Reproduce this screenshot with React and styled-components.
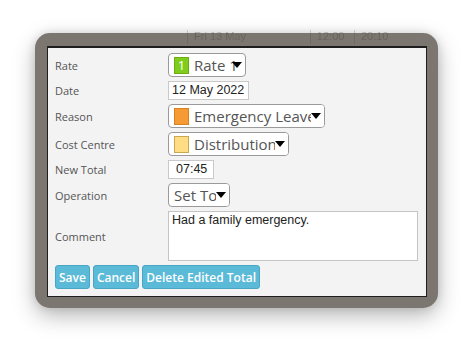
import React from 'react';
import styled, { createGlobalStyle } from 'styled-components';

const GlobalStyle = createGlobalStyle`
  html, body {
    margin: 0;
    padding: 0;
    background: #ffffff;
  }
  body {
    font-family: "Open Sans", "Liberation Sans", sans-serif;
  }
`;

const Page = styled.div`
  width: 474px;
  height: 344px;
  padding: 33px 36px 0 35px;
  box-sizing: border-box;
`;

const Frame = styled.div`
  position: relative;
  height: 275px;
  border-radius: 15px;
  background: #7b766f;
  padding: 13px 11px 11px 12px;
  box-sizing: border-box;
  box-shadow: 0 8px 22px rgba(0, 0, 0, 0.28), 0 0 10px rgba(0, 0, 0, 0.12);
`;

const BehindRow = styled.div`
  position: absolute;
  top: -3px;
  left: 152px;
  right: 40px;
  height: 14px;
  display: flex;
  font-family: "Liberation Sans", sans-serif;
  font-size: 11px;
  color: rgba(60, 55, 50, 0.3);
  filter: blur(0.7px);
`;

const BehindCell = styled.div`
  width: ${({ w }) => w}px;
  padding-left: 6px;
  border-left: 1px solid rgba(60, 55, 50, 0.2);
`;

const Dialog = styled.div`
  height: 100%;
  background: #f3f3f3;
  border: 1px solid #1e1e1e;
  border-top-width: 2px;
  box-sizing: border-box;
  padding: 5px 8px 0 7px;
  display: flex;
  flex-direction: column;
`;

const Form = styled.div`
  display: grid;
  grid-template-columns: 113px 1fr;
  row-gap: 4px;
  align-items: center;
`;

const Label = styled.div`
  font-size: 11px;
  color: #555;
`;

const Select = styled.div`
  position: relative;
  width: ${({ w }) => w}px;
  height: 24px;
  box-sizing: border-box;
  border: 1px solid #9a9a9a;
  border-radius: 4px;
  background: #fff;
  display: flex;
  align-items: center;
  gap: 5px;
  padding-left: 5px;
  overflow: hidden;
  font-size: 15px;
  color: #555;
  white-space: nowrap;
`;

const Swatch = styled.span`
  width: 15px;
  height: 17px;
  box-sizing: border-box;
  background: ${({ c }) => c};
  border: 1px solid ${({ b }) => b};
  color: #fff;
  font-size: 13px;
  line-height: 15px;
  text-align: center;
  flex-shrink: 0;
`;

const Arrow = styled.span`
  position: absolute;
  right: 3px;
  top: 8px;
  width: 0;
  height: 0;
  border-left: 5px solid transparent;
  border-right: 5px solid transparent;
  border-top: 6px solid #000;
`;

const ArrowBg = styled.span`
  position: absolute;
  right: 0;
  top: 0;
  bottom: 0;
  width: 13px;
  background: #fff;
`;

const TextBox = styled.div`
  width: ${({ w }) => w}px;
  height: 19px;
  box-sizing: border-box;
  border: 1px solid #c9c9c9;
  background: #fff;
  font-family: "Liberation Sans", Arial, sans-serif;
  font-size: 12.5px;
  color: #222;
  padding-left: ${({ pl }) => pl || 3}px;
  line-height: 17px;
`;

const TextArea = styled.div`
  width: 250px;
  height: 50px;
  box-sizing: border-box;
  border: 1px solid #c4c4c4;
  background: #fff;
  font-family: "Liberation Sans", Arial, sans-serif;
  font-size: 12.5px;
  color: #222;
  padding: 1px 3px;
`;

const Buttons = styled.div`
  display: flex;
  gap: 3px;
  margin-top: 4px;
`;

const Button = styled.button`
  height: 24px;
  padding: 0 3px;
  border: 1px solid #4aa6c4;
  border-radius: 3px;
  background: #5bbad8;
  color: #fff;
  font-family: "Open Sans", sans-serif;
  font-weight: 600;
  font-size: 12px;
  cursor: pointer;
`;

export default function App() {
  return (
    <>
      <GlobalStyle />
      <Page>
        <Frame>
          <BehindRow>
            <BehindCell w={125}>Fri 13 May</BehindCell>
            <BehindCell w={40}>12:00</BehindCell>
            <BehindCell w={40}>20:10</BehindCell>
          </BehindRow>
          <Dialog>
            <Form>
              <Label>Rate</Label>
              <Select w={78}>
                <Swatch c="#7fcc1c" b="#6aae12">1</Swatch>
                Rate 1
                <Arrow />
              </Select>

              <Label>Date</Label>
              <TextBox w={81}>12 May 2022</TextBox>

              <Label>Reason</Label>
              <Select w={157}>
                <Swatch c="#f59a35" b="#d9801f" />
                Emergency Leave
                <ArrowBg />
                <Arrow />
              </Select>

              <Label>Cost Centre</Label>
              <Select w={121}>
                <Swatch c="#fedd85" b="#c9a94d" />
                Distribution
                <ArrowBg />
                <Arrow />
              </Select>

              <Label>New Total</Label>
              <TextBox w={46} pl={7}>07:45</TextBox>

              <Label>Operation</Label>
              <Select w={62}>
                Set To
                <ArrowBg />
                <Arrow />
              </Select>

              <Label>Comment</Label>
              <TextArea>Had a family emergency.</TextArea>
            </Form>
            <Buttons>
              <Button>Save</Button>
              <Button>Cancel</Button>
              <Button>Delete Edited Total</Button>
            </Buttons>
          </Dialog>
        </Frame>
      </Page>
    </>
  );
}
